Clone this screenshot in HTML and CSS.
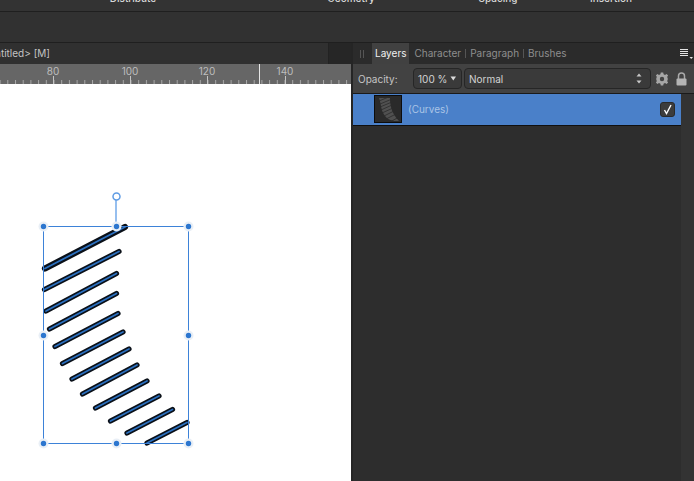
FILE: index.html
```html
<!DOCTYPE html>
<html lang="en">
<head>
<meta charset="utf-8">
<title>Layers</title>
<link rel="stylesheet" href="styles.css">
</head>
<body>
<div class="app">
  <div class="topbar">
    <span class="top-label l1">Distribute</span>
    <span class="top-label l2">Geometry</span>
    <span class="top-label l3">Spacing</span>
    <span class="top-label l4">Insertion</span>
  </div>
  <div class="toolbar"></div>
  <div class="main">
    <section class="doc">
      <div class="doc-tabs">
        <div class="doc-tab"><span class="doc-title">&lt;Untitled&gt; [M]</span></div>
      </div>
      <svg class="ruler" width="351" height="20" viewBox="0 0 351 20">
        <defs>
          <pattern id="minor" x="53.5" y="0" width="7.7" height="20" patternUnits="userSpaceOnUse">
            <rect x="0" y="16" width="1" height="4" fill="#a8a8a8"/>
          </pattern>
        </defs>
        <rect width="351" height="20" fill="#666666"/>
        <rect width="351" height="20" fill="url(#minor)"/>
        <g fill="#c4c4c4">
          <rect x="53" y="12" width="1" height="8"/>
          <rect x="130" y="12" width="1" height="8"/>
          <rect x="207" y="12" width="1" height="8"/>
          <rect x="285" y="12" width="1" height="8"/>
        </g>
        <rect x="259" y="0" width="1" height="20" fill="#e6e6e6"/>
        <g class="ruler-text">
          <text x="53" y="10.500">80</text>
          <text x="130" y="10.500">100</text>
          <text x="207" y="10.500">120</text>
          <text x="285" y="10.500">140</text>
        </g>
      </svg>
      <div class="canvas">
        <svg class="art" width="351" height="397" viewBox="0 84 351 397">
          <g class="stroke-out">
            <path class="thick" d="M45 268.500L125 227"/>
            <path d="M44.500 289.500L119 251.500"/>
            <path d="M46 311L116.500 273.500"/>
            <path d="M49.500 329L116.500 293.500"/>
            <path d="M55 346.500L118 313.500"/>
            <path d="M62.500 363.500L123 332"/>
            <path d="M72 379L129 349"/>
            <path d="M82.500 394L137 365"/>
            <path d="M95.500 408L147 381"/>
            <path d="M110.500 421L159 396"/>
            <path d="M127 433L172.500 409.500"/>
            <path d="M147 443L187 422.500"/>
          </g>
          <g class="stroke-in">
            <path class="thick" d="M45 268.500L125 227"/>
            <path d="M44.500 289.500L119 251.500"/>
            <path d="M46 311L116.500 273.500"/>
            <path d="M49.500 329L116.500 293.500"/>
            <path d="M55 346.500L118 313.500"/>
            <path d="M62.500 363.500L123 332"/>
            <path d="M72 379L129 349"/>
            <path d="M82.500 394L137 365"/>
            <path d="M95.500 408L147 381"/>
            <path d="M110.500 421L159 396"/>
            <path d="M127 433L172.500 409.500"/>
            <path d="M147 443L187 422.500"/>
          </g>
          <rect class="sel" x="43.500" y="226.500" width="145" height="217"/>
          <path class="rot-line" d="M116 200V226"/>
          <circle class="rot" cx="116.500" cy="196.500" r="3.500"/>
          <g class="halo">
            <circle cx="43.500" cy="226.500" r="5"/><circle cx="116.500" cy="226.500" r="5"/><circle cx="188.500" cy="226.500" r="5"/>
            <circle cx="43.500" cy="335.500" r="5"/><circle cx="188.500" cy="335.500" r="5"/>
            <circle cx="43.500" cy="443.500" r="5"/><circle cx="116.500" cy="443.500" r="5"/><circle cx="188.500" cy="443.500" r="5"/>
          </g>
          <g class="handle">
            <circle cx="43.500" cy="226.500" r="2.700"/><circle cx="116.500" cy="226.500" r="2.700"/><circle cx="188.500" cy="226.500" r="2.700"/>
            <circle cx="43.500" cy="335.500" r="2.700"/><circle cx="188.500" cy="335.500" r="2.700"/>
            <circle cx="43.500" cy="443.500" r="2.700"/><circle cx="116.500" cy="443.500" r="2.700"/><circle cx="188.500" cy="443.500" r="2.700"/>
          </g>
        </svg>
      </div>
    </section>
    <aside class="panel">
      <div class="tabs">
        <span class="grip"></span>
        <span class="tab active">Layers</span>
        <span class="tab">Character</span>
        <span class="sep"></span>
        <span class="tab">Paragraph</span>
        <span class="sep"></span>
        <span class="tab">Brushes</span>
        <svg class="menu-icon" width="14" height="12" viewBox="0 0 14 12">
          <path d="M0 1.500H8M0 3.500H8M0 5.500H8M0 7.500H8" stroke="#e4e4e4" stroke-width="1"/>
          <path d="M9.500 9L13 9L11.250 11Z" fill="#e4e4e4"/>
        </svg>
      </div>
      <div class="options">
        <span class="opacity-label">Opacity:</span>
        <div class="field opacity"><span>100 %</span>
          <svg width="7" height="5" viewBox="0 0 7 5"><path d="M0.500 0.500H6L3.250 4.500Z" fill="#dcdcdc"/></svg>
        </div>
        <div class="field blend"><span>Normal</span>
          <svg width="6" height="11" viewBox="0 0 6 11"><path d="M3 0.500L5.500 3.500H0.500ZM3 10.500L0.500 7.500H5.500Z" fill="#c8c8c8"/></svg>
        </div>
        <svg class="gear" width="14" height="14" viewBox="0 0 14 14">
          <path fill="#a6a6a6" fill-rule="evenodd" d="M5.800 0.500H8.200L8.600 2.300L10 2.900L11.600 1.900L13.100 3.400L12.100 5L12.700 6V8L12.100 9L13.100 10.600L11.600 12.100L10 11.100L8.600 11.700L8.200 13.500H5.800L5.400 11.700L4 11.100L2.400 12.100L0.900 10.600L1.900 9L1.300 8V6L1.900 5L0.900 3.400L2.400 1.900L4 2.900L5.400 2.300ZM7 4.800A2.200 2.200 0 1 0 7 9.200A2.200 2.200 0 1 0 7 4.800Z"/>
        </svg>
        <svg class="lock" width="11" height="14" viewBox="0 0 11 14">
          <path fill="none" stroke="#a9a9a9" stroke-width="1.500" d="M2.500 7V4A3 3 0 0 1 8.500 4V7"/>
          <rect x="0.500" y="6.500" width="10" height="7" rx="1" fill="#b4b4b4"/>
        </svg>
      </div>
      <div class="layers">
        <div class="layer-list">
          <div class="layer">
            <div class="thumb">
              <svg width="26" height="26" viewBox="0 0 26 26">
                <path d="M4 2H15C15 10 17 18 24 25H19C11 24 7 17 6 10C5.500 7 5 5 4 2Z" fill="#505050"/>
                <path d="M4 5L16 0M5 8L17 3M5 11L17 6M6 14L17 9M7 17L18 12M9 20L19 15M11 23L21 18M15 26L24 21" stroke="#2b2b2b" stroke-width="0.800" fill="none"/>
              </svg>
            </div>
            <span class="layer-name">(Curves)</span>
            <span class="check">
              <svg width="10" height="11" viewBox="0 0 10 11"><path d="M1.500 6L3.500 9.500L8 1" fill="none" stroke="#fff" stroke-width="1.400"/></svg>
            </span>
          </div>
        </div>
        <div class="scroll-strip"></div>
      </div>
    </aside>
  </div>
</div>
</body>
</html>
```
FILE: styles.css
```css
* { box-sizing: border-box; }
html, body { margin: 0; padding: 0; }
body { background: #2f2f2f; font-family: "Inter", "Liberation Sans", sans-serif; overflow: hidden; }
.app { width: 694px; height: 481px; display: flex; flex-direction: column; overflow: hidden; }
.topbar { height: 12px; background: #333333; border-bottom: 1px solid #1f1f1f; position: relative; overflow: hidden; flex: none; }
.top-label { position: absolute; top: -9px; font-size: 10px; line-height: 14px; color: #d8d8d8; font-weight: 500; transform: translateX(-50%); }
.l1 { left: 133px; }
.l2 { left: 351px; }
.l3 { left: 498px; }
.l4 { left: 611px; }
.toolbar { height: 31px; background: #313131; border-bottom: 1px solid #1f1f1f; flex: none; }
.main { flex: 1; display: flex; min-height: 0; }
.doc { width: 351px; flex: none; display: flex; flex-direction: column; }
.doc-tabs { height: 21px; background: #262626; flex: none; }
.doc-tab { width: 329px; height: 21px; background: #303030; border-right: 1px solid #222; position: relative; overflow: hidden; }
.doc-title { position: absolute; right: 278px; top: 3px; font-size: 10px; line-height: 15px; color: #c4c4c4; white-space: nowrap; }
.ruler { display: block; flex: none; }
.ruler-text { fill: #bdbdbd; font-size: 10px; text-anchor: middle; font-family: "Inter", "Liberation Sans", sans-serif; }
.canvas { flex: 1; background: #fff; min-height: 0; }
.art { display: block; }
.stroke-out path { stroke: #0a1018; stroke-width: 5.200; stroke-linecap: round; fill: none; }
.stroke-out path.thick { stroke-width: 6.200; }
.stroke-in path { stroke: #2b70c0; stroke-width: 1.800; stroke-linecap: round; fill: none; }
.sel { fill: none; stroke: #3d82d8; stroke-width: 1; }
.rot-line { stroke: #73aaea; stroke-width: 1.500; fill: none; }
.rot { fill: #fff; stroke: #5f9ce4; stroke-width: 1.500; }
.halo circle { fill: #e9eff6; }
.handle circle { fill: #2c76cf; }
.panel { flex: 1; background: #2d2d2d; display: flex; flex-direction: column; border-left: 2px solid #252525; }
.tabs { height: 21px; flex: none; display: flex; align-items: center; padding: 0 0 0 7px; background: #2b2b2b; font-size: 10px; color: #8e8e8e; }
.grip { width: 4px; height: 8px; border-left: 1px solid #555; border-right: 1px solid #555; margin-right: 8px; }
.tab { padding: 0 4px; line-height: 21px; }
.tab.active { background: #414141; color: #f0f0f0; height: 21px; padding: 0 3px; margin-right: 1px; }
.sep { width: 1px; height: 9px; background: #555; }
.menu-icon { margin-left: auto; margin-right: 0; }
.options { height: 30px; flex: none; display: flex; align-items: center; background: #424242; padding-left: 5px; font-size: 10px; color: #c4c4c4; border-bottom: 1px solid #1a1a1a; }
.opacity-label { width: 55px; }
.field { height: 21px; background: #3a3a3a; border: 1px solid #262626; border-radius: 4px; display: flex; align-items: center; justify-content: space-between; color: #d4d4d4; }
.opacity { width: 49px; padding: 0 4px; margin-right: 2px; }
.blend { width: 187px; padding: 0 8px 0 4px; }
.gear { margin-left: 4px; }
.lock { margin-left: 7px; }
.layers { flex: 1; display: flex; min-height: 0; }
.layer-list { width: 328px; flex: none; }
.scroll-strip { flex: 1; background: #333333; }
.layer { height: 32px; background: #4a80c9; border-bottom: 1px solid #101010; display: flex; align-items: center; padding-left: 21px; padding-bottom: 1px; }
.thumb { width: 28px; height: 28px; background: #2a2a2a; border: 1px solid #0c0c0c; flex: none; }
.thumb svg { display: block; }
.layer-name { margin-left: 6px; font-size: 10px; color: #a9c4e6; }
.check { margin-left: auto; margin-right: 6px; width: 15px; height: 15px; border-radius: 3px; background: #3c3c3c; border: 1px solid #2a2a2a; display: flex; align-items: center; justify-content: center; }
```
